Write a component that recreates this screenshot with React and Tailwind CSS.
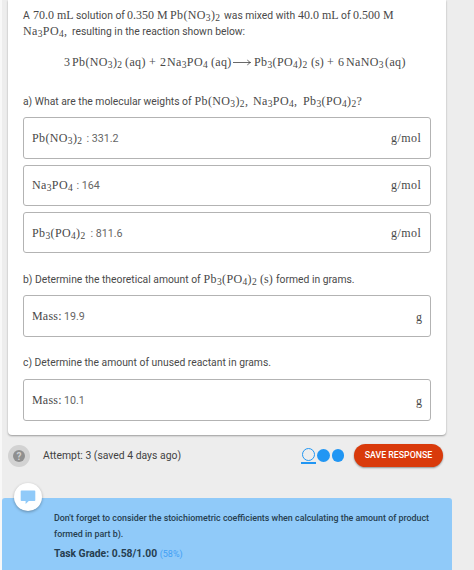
import React from "react";
import clsx from "clsx";

const SERIF = "font-['Liberation_Serif',serif] text-[12px] text-[#484848]";

// "Pb3(PO4)2" -> digits that follow a letter or a bracket are set as subscripts
function Chem({ children, className }) {
  return (
    <span className={clsx("inline-block whitespace-nowrap tracking-[0.36px]", SERIF, className)}>
      {children.split(/(\d)/).map((part, i) =>
        /^\d$/.test(part) ? (
          <span key={i} className="relative top-[2px] text-[9.5px]">
            {part}
          </span>
        ) : (
          part
        )
      )}
    </span>
  );
}

function Num({ children, className }) {
  return <span className={clsx("inline-block whitespace-nowrap", SERIF, className)}>{children}</span>;
}

function Txt({ children, className }) {
  return <span className={clsx("inline-block whitespace-nowrap", className)}>{children}</span>;
}

function Field({ label, value, unit }) {
  return (
    <div className="flex h-[41.3px] items-center justify-between rounded-[3px] border border-[#b3b3b3] pl-2 pr-2">
      <div className="flex items-baseline whitespace-nowrap text-[10.7px] text-[#666666]">
        {label}
        <span>{value}</span>
      </div>
      {unit === "g" ? (
        <Num className="relative top-px text-[#5a5a5a]">g</Num>
      ) : (
        <Num className="w-[31px] tracking-[0.45px] text-[#5a5a5a]">{unit}</Num>
      )}
    </div>
  );
}

function Arrow() {
  return (
    <svg className="ml-[2px] mr-[3px] h-[7px] w-[18px] self-center" viewBox="0 0 18 7" fill="none" stroke="#424242" strokeWidth="0.8">
      <path d="M0 3.5H17.4M14.6 0.8C15.2 2.3 16.2 3.1 17.6 3.5C16.2 3.9 15.2 4.7 14.6 6.2" />
    </svg>
  );
}

function QuestionCard() {
  return (
    <main className="ml-2 h-[435px] w-[438px] rounded-b-[4px] bg-white pl-[15px] pr-[15px] pt-[7px] shadow-[0_1px_2px_rgba(0,0,0,0.35)]">
      <div className="flex h-4 items-baseline leading-4">
        <Txt className="w-[10px]">A</Txt>
        <Num className="w-[43px]">70.0 mL</Num>
        <Txt className="w-[51px]">solution of</Txt>
        <Num className="w-[43px]">0.350 M</Num>
        <Chem className="w-[54px]">Pb(NO3)2</Chem>
        <Txt className="w-[74px]">was mixed with</Txt>
        <Num className="w-[43px]">40.0 mL</Num>
        <Txt className="w-[12px]">of</Txt>
        <Num>0.500 M</Num>
      </div>
      <div className="flex h-4 items-baseline leading-4">
        <Chem className="w-[49px]">Na3PO4,</Chem>
        <Txt>resulting in the reaction shown below:</Txt>
      </div>

      <div className="mt-[15px] flex h-4 items-baseline pl-[41px] leading-4">
        <Num className="w-[8px]">3</Num>
        <Chem className="w-[53px]">Pb(NO3)2</Chem>
        <Num className="w-[24px] tracking-[0.4px]">(aq)</Num>
        <Num className="w-[11px]">+</Num>
        <Num className="w-[7px]">2</Num>
        <Chem className="w-[44px]">Na3PO4</Chem>
        <Num className="w-[20px] tracking-[0.3px]">(aq)</Num>
        <Arrow />
        <Chem className="w-[57px]">Pb3(PO4)2</Chem>
        <Num className="w-[16px]">(s)</Num>
        <Num className="w-[11px]">+</Num>
        <Num className="w-[8px]">6</Num>
        <Chem className="w-[39px]">NaNO3</Chem>
        <Num className="tracking-[0.4px]">(aq)</Num>
      </div>

      <div className="mt-[23px] flex h-4 items-baseline leading-4">
        <Txt className="w-[171.5px]">a) What are the molecular weights of</Txt>
        <Chem className="w-[58.5px]">Pb(NO3)2,</Chem>
        <Chem className="w-[50px]">Na3PO4,</Chem>
        <Chem>Pb3(PO4)2?</Chem>
      </div>
      <div className="mt-[8.3px] flex flex-col gap-[6px]">
        <Field label={<Chem className="w-[54.5px]">Pb(NO3)2</Chem>} value=": 331.2" unit="g/mol" />
        <Field label={<Chem className="w-[44.5px]">Na3PO4</Chem>} value=": 164" unit="g/mol" />
        <Field label={<Chem className="w-[58.5px]">Pb3(PO4)2</Chem>} value=": 811.6" unit="g/mol" />
      </div>

      <div className="mt-[18.2px] flex h-4 items-baseline leading-4">
        <Txt className="w-[180.5px]">b) Determine the theoretical amount of</Txt>
        <Chem className="w-[56.5px]">Pb3(PO4)2</Chem>
        <Num className="w-[16px]">(s)</Num>
        <Txt>formed in grams.</Txt>
      </div>
      <div className="mt-2">
        <Field label={<Num className="w-[32px] tracking-[0.2px]">Mass:</Num>} value="19.9" unit="g" />
      </div>

      <div className="mt-[18.7px] h-4 leading-4">c) Determine the amount of unused reactant in grams.</div>
      <div className="mt-2">
        <Field label={<Num className="w-[32px] tracking-[0.2px]">Mass:</Num>} value="10.1" unit="g" />
      </div>
    </main>
  );
}

function AttemptBar() {
  return (
    <div className="flex h-[63px] items-start pl-2 pt-[9px]">
      <div className="mt-px flex h-[22px] w-[22px] items-center justify-center rounded-full bg-[#d2d2d2]">
        <div className="flex h-3 w-3 items-center justify-center rounded-full bg-[#8f8f8f] text-[10px] font-bold text-[#d2d2d2]">?</div>
      </div>
      <div className="ml-[13px] mt-px w-[258px] text-[10.4px] leading-[22px] text-[#424242]">Attempt: 3 (saved 4 days ago)</div>
      <div className="mt-1 flex h-4 w-[15px] flex-col items-center justify-between">
        <div className="h-[13px] w-[13px] shrink-0 rounded-full border-[1.5px] border-[#2196f3]" />
        <div className="h-[2px] w-[15px] shrink-0 bg-[#2196f3]" />
      </div>
      <div className="ml-[1px] mt-[5px] h-[12.5px] w-[12.5px] rounded-full bg-[#2196f3]" />
      <div className="ml-[2px] mt-[5px] h-[12.5px] w-[12.5px] rounded-full bg-[#2196f3]" />
      <button className="ml-[10px] h-[23px] w-[89px] whitespace-nowrap rounded-full bg-[#d93a0b] text-[8.8px] font-medium text-white shadow-[0_1px_2px_rgba(0,0,0,0.4)]">
        SAVE RESPONSE
      </button>
    </div>
  );
}

function Feedback() {
  return (
    <section className="relative ml-[2px] h-[72px] w-[450px] rounded-t-[3px] bg-[#90caf9] pl-[52px] pt-[12px] text-[#263e50]">
      <div className="absolute left-3 top-[-15px] flex h-7 w-7 items-center justify-center rounded-full bg-white shadow-[0_1px_3px_rgba(0,0,0,0.3)]">
        <svg className="h-4 w-4" viewBox="0 0 16 16" fill="#90caf9">
          <path d="M1.5 1.5h13a.8.8 0 0 1 .8.8v9a.8.8 0 0 1-.8.8H8.8L5.6 15v-2.9H1.5a.8.8 0 0 1-.8-.8v-9a.8.8 0 0 1 .8-.8z" />
        </svg>
      </div>
      <p className="whitespace-nowrap text-[8.88px] font-medium leading-4">
        Don't forget to consider the stoichiometric coefficients when calculating the amount of product
        <br />
        formed in part b).
      </p>
      <p className="mt-[4px] text-[10.35px] font-bold leading-4">
        Task Grade: 0.58/1.00 <span className="text-[9px] font-normal text-[#42a0f5]">(58%)</span>
      </p>
    </section>
  );
}

export default function App() {
  return (
    <div className="h-[570px] w-[474px] overflow-hidden border-l-2 border-[#f8f8f8] bg-[#ededed] font-['Roboto',sans-serif] text-[10.33px] text-[#4a4a4a]">
      <div className="ml-[-2px]">
        <QuestionCard />
        <AttemptBar />
        <Feedback />
      </div>
    </div>
  );
}
